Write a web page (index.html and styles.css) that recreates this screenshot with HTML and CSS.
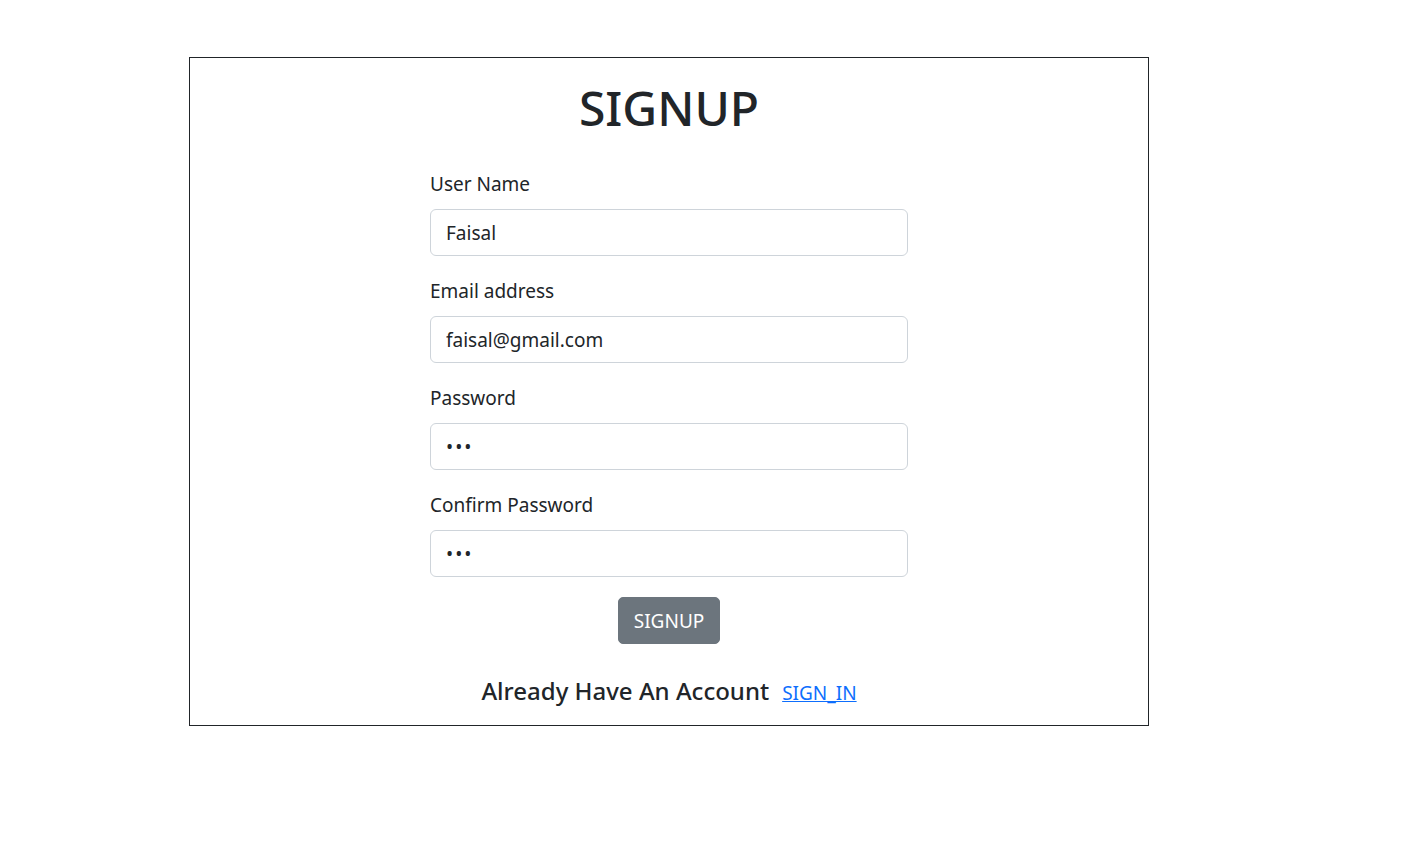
FILE: index.html
```html
<!DOCTYPE html>
<html lang="en">
<head>
<meta charset="utf-8">
<title>Signup</title>
<link rel="stylesheet" href="styles.css">
</head>
<body>
<div class="card">
  <h1 class="title">SIGNUP</h1>
  <form class="form">
    <div class="group">
      <label class="label" for="u">User Name</label>
      <input class="control" id="u" type="text" value="Faisal">
    </div>
    <div class="group">
      <label class="label" for="e">Email address</label>
      <input class="control" id="e" type="email" value="faisal@gmail.com">
    </div>
    <div class="group">
      <label class="label" for="p">Password</label>
      <input class="control control-pw" id="p" type="password" value="123">
    </div>
    <div class="group">
      <label class="label" for="c">Confirm Password</label>
      <input class="control control-pw" id="c" type="password" value="123">
    </div>
    <div class="actions">
      <button class="btn" type="button">SIGNUP</button>
    </div>
  </form>
  <div class="footer">
    <span class="footer-text">Already Have An Account</span>
    <a class="link" href="#">SIGN_IN</a>
  </div>
</div>
</body>
</html>
```

FILE: styles.css
```css
* { box-sizing: border-box; }
html, body { margin: 0; padding: 0; background: #fff; }
body {
  font-family: "Noto Sans", "Open Sans", sans-serif;
  color: #212529;
}
.card {
  width: 960px;
  margin: 57px 0 0 189px;
  border: 1px solid #212529;
  padding: 20px 0 19px;
}
.title {
  margin: 0 0 10px;
  text-align: center;
  font-size: 48px;
  font-weight: 500;
  line-height: 60px;
}
.form {
  width: 478px;
  margin: 31px auto 0;
}
.group { margin-bottom: 20px; }
.label {
  display: block;
  font-size: 19px;
  line-height: 30px;
  margin-bottom: 10px;
}
.control {
  display: block;
  width: 100%;
  height: 47px;
  padding: 7px 15px;
  font-family: inherit;
  font-size: 19px;
  color: #212529;
  border: 1px solid #ced4da;
  border-radius: 6px;
  background: #fff;
  outline: none;
}
.control-pw { letter-spacing: 2px; }
.actions { display: flex; justify-content: center; }
.btn {
  height: 47px;
  padding: 0 15px;
  font-family: inherit;
  font-size: 19px;
  color: #fff;
  background: #6c757d;
  border: 1px solid #6c757d;
  border-radius: 5px;
}
.footer {
  display: flex;
  justify-content: center;
  align-items: baseline;
  gap: 13px;
  margin-top: 32px;
}
.footer-text {
  font-size: 24px;
  font-weight: 500;
  line-height: 30px;
}
.link {
  font-size: 19px;
  color: #0d6efd;
  text-decoration: underline;
}
```
